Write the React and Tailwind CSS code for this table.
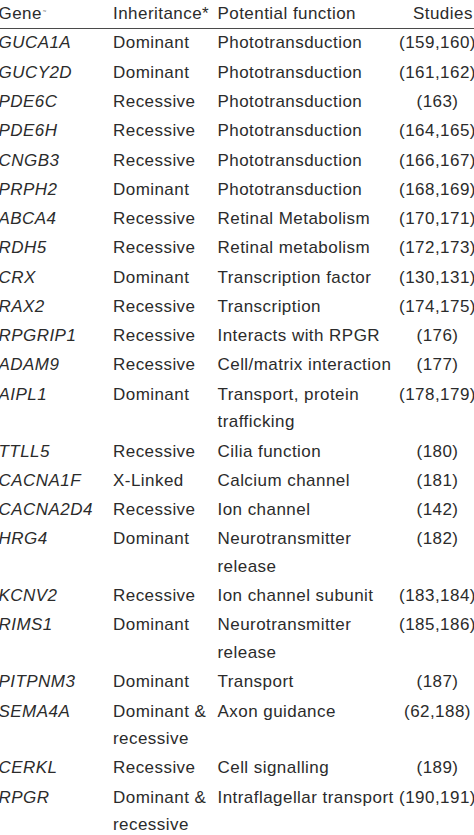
const rows = [
  ["GUCA1A", ["Dominant"], ["Phototransduction"], "(159,160)"],
  ["GUCY2D", ["Dominant"], ["Phototransduction"], "(161,162)"],
  ["PDE6C", ["Recessive"], ["Phototransduction"], "(163)"],
  ["PDE6H", ["Recessive"], ["Phototransduction"], "(164,165)"],
  ["CNGB3", ["Recessive"], ["Phototransduction"], "(166,167)"],
  ["PRPH2", ["Dominant"], ["Phototransduction"], "(168,169)"],
  ["ABCA4", ["Recessive"], ["Retinal Metabolism"], "(170,171)"],
  ["RDH5", ["Recessive"], ["Retinal metabolism"], "(172,173)"],
  ["CRX", ["Dominant"], ["Transcription factor"], "(130,131)"],
  ["RAX2", ["Recessive"], ["Transcription"], "(174,175)"],
  ["RPGRIP1", ["Recessive"], ["Interacts with RPGR"], "(176)"],
  ["ADAM9", ["Recessive"], ["Cell/matrix interaction"], "(177)"],
  ["AIPL1", ["Dominant"], ["Transport, protein", "trafficking"], "(178,179)"],
  ["TTLL5", ["Recessive"], ["Cilia function"], "(180)"],
  ["CACNA1F", ["X-Linked"], ["Calcium channel"], "(181)"],
  ["CACNA2D4", ["Recessive"], ["Ion channel"], "(142)"],
  ["HRG4", ["Dominant"], ["Neurotransmitter", "release"], "(182)"],
  ["KCNV2", ["Recessive"], ["Ion channel subunit"], "(183,184)"],
  ["RIMS1", ["Dominant"], ["Neurotransmitter", "release"], "(185,186)"],
  ["PITPNM3", ["Dominant"], ["Transport"], "(187)"],
  ["SEMA4A", ["Dominant &", "recessive"], ["Axon guidance"], "(62,188)"],
  ["CERKL", ["Recessive"], ["Cell signalling"], "(189)"],
  ["RPGR", ["Dominant &", "recessive"], ["Intraflagellar transport"], "(190,191)"],
];

const cols = "grid grid-cols-[114.5px_104.5px_177.5px_85px]";

function Lines({ items }) {
  return items.map((t, i) => (
    <div key={i} className="whitespace-nowrap">
      {t}
    </div>
  ));
}

export default function App() {
  return (
    <div className="w-[474px] h-[835px] overflow-hidden bg-white">
      <div
        className="ml-[-1.5px] w-[481.5px] text-[17px] tracking-[0.45px] leading-[27.5px] text-[#2b2b2b]"
        style={{ fontFamily: '"Liberation Sans", Arial, sans-serif' }}
      >
        <div className={`${cols} h-[27.5px] border-b-[1.5px] border-[#4a4a4a] box-content`}>
          <div className="whitespace-nowrap">
            Gene<sup className="text-[9px] text-[#888] ml-[1px] relative top-[-2px]">˜</sup>
          </div>
          <div className="whitespace-nowrap">Inheritance*</div>
          <div className="whitespace-nowrap">Potential function</div>
          <div className="whitespace-nowrap pl-[18px]">Studies</div>
        </div>
        {rows.map(([gene, inh, fn, ref]) => (
          <div key={gene} className={`${cols} py-[0.9px]`}>
            <div className="italic whitespace-nowrap">{gene}</div>
            <div>
              <Lines items={inh} />
            </div>
            <div>
              <Lines items={fn} />
            </div>
            <div className="text-center whitespace-nowrap">{ref}</div>
          </div>
        ))}
      </div>
    </div>
  );
}
